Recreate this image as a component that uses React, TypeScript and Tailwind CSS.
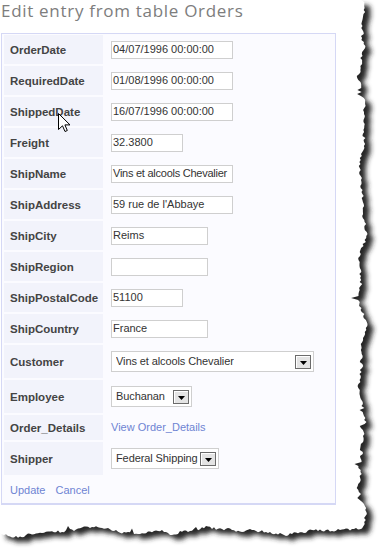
import React from "react";

type Field = {
  label: string;
  kind: "input" | "select" | "link";
  value: string;
  w: string;
  h: string;
  t?: string;
};

const fields: Field[] = [
  { label: "OrderDate", kind: "input", value: "04/07/1996 00:00:00", w: "w-[122px]", h: "h-[29px]" },
  { label: "RequiredDate", kind: "input", value: "01/08/1996 00:00:00", w: "w-[122px]", h: "h-[29px]" },
  { label: "ShippedDate", kind: "input", value: "16/07/1996 00:00:00", w: "w-[122px]", h: "h-[29px]" },
  { label: "Freight", kind: "input", value: "32.3800", w: "w-[72px]", h: "h-[29px]" },
  { label: "ShipName", kind: "input", value: "Vins et alcools Chevalier", w: "w-[122px]", h: "h-[29px]", t: "tracking-[-0.25px]" },
  { label: "ShipAddress", kind: "input", value: "59 rue de l'Abbaye", w: "w-[122px]", h: "h-[29px]" },
  { label: "ShipCity", kind: "input", value: "Reims", w: "w-[97px]", h: "h-[29px]" },
  { label: "ShipRegion", kind: "input", value: "", w: "w-[97px]", h: "h-[29px]" },
  { label: "ShipPostalCode", kind: "input", value: "51100", w: "w-[72px]", h: "h-[29px]" },
  { label: "ShipCountry", kind: "input", value: "France", w: "w-[97px]", h: "h-[29px]" },
  { label: "Customer", kind: "select", value: "Vins et alcools Chevalier", w: "w-[203px]", h: "h-[33px]" },
  { label: "Employee", kind: "select", value: "Buchanan", w: "w-[81px]", h: "h-[33px]" },
  { label: "Order_Details", kind: "link", value: "View Order_Details", w: "", h: "h-[25px]" },
  { label: "Shipper", kind: "select", value: "Federal Shipping", w: "w-[108px]", h: "h-[33px]" },
];

function mulberry(seed: number) {
  return () => {
    seed |= 0;
    seed = (seed + 0x6d2b79f5) | 0;
    let t = Math.imul(seed ^ (seed >>> 15), 1 | seed);
    t = (t + Math.imul(t ^ (t >>> 7), 61 | t)) ^ t;
    return ((t ^ (t >>> 14)) >>> 0) / 4294967296;
  };
}

function paperPath(): string {
  const r = mulberry(7);
  const pts: string[] = ["M0,0"];
  let x = 362;
  for (let y = 0; y <= 524; y += 2) {
    const base = 362 + 2.5 * Math.sin(y / 16) + 1.5 * Math.sin(y / 7.3 + 1);
    x = x * 0.4 + base * 0.6 + (r() - 0.5) * 3.5;
    if (r() < 0.05) x -= 3 + r() * 4;
    pts.push(`L${x.toFixed(1)},${y}`);
  }
  let yy = 528;
  for (let xx = 362; xx >= 0; xx -= 2) {
    const base = 531 + 2.5 * Math.sin(xx / 21 + 0.5) + 1.2 * Math.sin(xx / 8.7) + (xx < 40 ? 2 : 0);
    yy = yy * 0.4 + base * 0.6 + (r() - 0.5) * 3;
    if (r() < 0.05) yy -= 2 + r() * 3;
    pts.push(`L${xx},${yy.toFixed(1)}`);
  }
  pts.push("L0,0Z");
  return pts.join(" ");
}

const PAPER = paperPath();

function DropButton() {
  return (
    <span className="flex h-[14px] w-[16px] shrink-0 items-center justify-center border border-[#6b6b6b] bg-[#e4e4e4] shadow-[inset_1px_1px_0_#ffffff]">
      <svg width="7" height="4" viewBox="0 0 7 4" className="mt-[3px]">
        <path d="M0 0 H7 L3.5 4 Z" fill="#000" />
      </svg>
    </span>
  );
}

function Value({ f }: { f: Field }) {
  if (f.kind === "input") {
    return (
      <div className={`${f.w} ${f.t ?? ""} flex h-[18px] items-center overflow-hidden whitespace-nowrap border border-[#cfcfcf] bg-white pl-[1px] text-[11px] text-[#333]`}>
        {f.value}
      </div>
    );
  }
  if (f.kind === "select") {
    return (
      <div className={`${f.w} flex h-[21px] items-center justify-between gap-[2px] border border-[#cfcfcf] bg-white pl-[4px] pr-[2px] text-[11px] text-[#333]`}>
        <span className="overflow-hidden whitespace-nowrap tracking-[-0.1px]">{f.value}</span>
        <DropButton />
      </div>
    );
  }
  return <span className="text-[11px] text-[#6e84d3]">{f.value}</span>;
}

export default function App() {
  return (
    <div
      className="relative h-[549px] w-[381px] overflow-hidden bg-white"
      style={{ fontFamily: '"Liberation Sans", Arial, sans-serif' }}
    >
      <svg width="381" height="549" className="absolute left-0 top-0">
        <defs>
          <filter id="blur" x="-20%" y="-20%" width="140%" height="140%">
            <feGaussianBlur stdDeviation="2.4" />
          </filter>
        </defs>
        <path d={PAPER} fill="#262626" transform="translate(6,5)" filter="url(#blur)" />
        <path d={PAPER} fill="#ffffff" />
      </svg>

      <div className="relative">
        <div
          className="pl-[1px] text-[17px] leading-[21px] tracking-[0.7px] text-[#7d7d7d]"
          style={{ fontFamily: '"Open Sans", sans-serif' }}
        >
          Edit entry from table Orders
        </div>

        <div className="ml-[1px] mt-[12px] w-[335px] border border-b-2 border-[#d5d8f5] bg-[#fbfbff] px-[2px] pt-[1px]">
          <div className="flex flex-col gap-[2px]">
            {fields.map((f) => (
              <div key={f.label} className={`flex ${f.h} gap-[2px]`}>
                <div className="flex w-[99px] shrink-0 items-center bg-[#f2f3fb] pl-[6px] pt-[2px] text-[11.5px] font-bold text-[#444]">
                  {f.label}
                </div>
                <div className="flex items-center pl-[6px]">
                  <Value f={f} />
                </div>
              </div>
            ))}
            <div className="flex h-[26px] items-center gap-[10px] pl-[6px] text-[11px] text-[#6e84d3]">
              <span>Update</span>
              <span>Cancel</span>
            </div>
          </div>
        </div>
      </div>

      <svg width="13" height="20" viewBox="0 0 13 20" className="absolute left-[58px] top-[113px]">
        <path
          d="M0.5 0.5 L0.5 16.5 L4.5 12.8 L7 18.5 L9.3 17.5 L6.9 11.9 L12 11.9 Z"
          fill="#fff"
          stroke="#000"
          strokeWidth="1"
          strokeLinejoin="miter"
        />
      </svg>
    </div>
  );
}
